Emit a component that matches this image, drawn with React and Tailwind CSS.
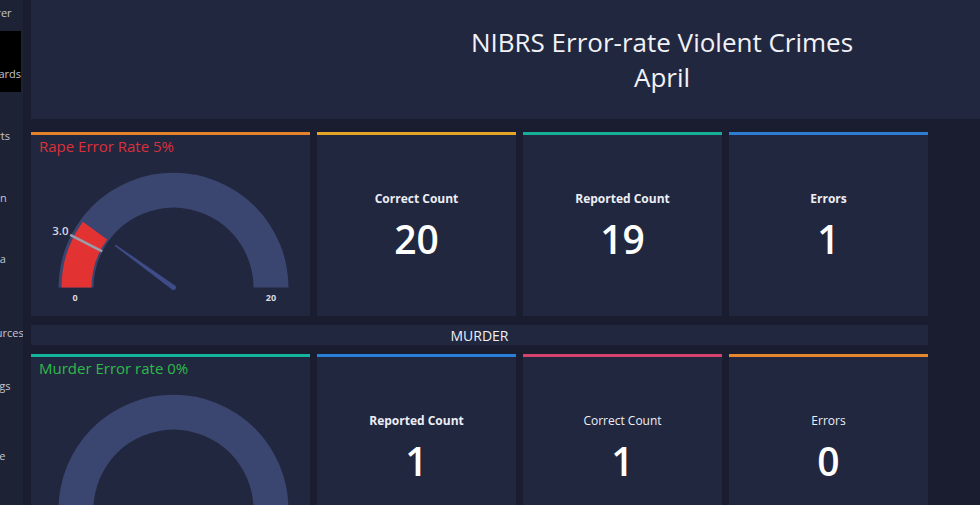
import React from "react";

const navItems = [
  { label: "Explorer", h: "h-[31px]" },
  { label: "Dashboards", h: "h-[61px]", active: true },
  { label: "Reports", h: "h-[62px]" },
  { label: "Admin", h: "h-[62px]" },
  { label: "Media", h: "h-[61px]" },
  { label: "Data Sources", h: "h-[74px]" },
  { label: "Settings", h: "h-[53px]" },
  { label: "Home", h: "h-[70px]" },
];

function Gauge({ value = 4, marker = 3, max = 20, showMarker = true }) {
  const cx = 142.5;
  const cy = 132.6;
  const pt = (r, deg) => {
    const a = (deg * Math.PI) / 180;
    return [cx - r * Math.cos(a), cy - r * Math.sin(a)];
  };
  const va = (value / max) * 180;
  const ma = (marker / max) * 180;
  const [ox, oy] = pt(112, va);
  const [ix, iy] = pt(82, va);
  const [m1x, m1y] = pt(80, ma);
  const [m2x, m2y] = pt(116, ma);
  const [tx, ty] = pt(72, va);
  const a = (va * Math.PI) / 180;
  const nx = Math.sin(a);
  const ny = -Math.cos(a);
  const needle = [
    [cx + 2.5 * nx, cy + 2.5 * ny],
    [tx + 0.8 * nx, ty + 0.8 * ny],
    [tx - 0.8 * nx, ty - 0.8 * ny],
    [cx - 2.5 * nx, cy - 2.5 * ny],
  ]
    .map((p) => p.join(","))
    .join(" ");
  return (
    <svg width="279" height="161" viewBox="0 0 279 161" className="block">
      <path
        d={`M ${cx - 115} ${cy} A 115 115 0 0 1 ${cx + 115} ${cy} L ${cx + 80} ${cy} A 80 80 0 0 0 ${cx - 80} ${cy} Z`}
        fill="#3a4570"
      />
      {value > 0 && (
        <path
          d={`M ${cx - 112} ${cy} A 112 112 0 0 1 ${ox} ${oy} L ${ix} ${iy} A 82 82 0 0 0 ${cx - 82} ${cy} Z`}
          fill="#e33232"
        />
      )}
      {showMarker && (
        <>
          <line x1={m1x} y1={m1y} x2={m2x} y2={m2y} stroke="#9a9dab" strokeWidth="2.5" />
          <text x="37.5" y="80" textAnchor="end" fontSize="11.5" fontWeight="600" fill="#d6d8e0">
            {marker.toFixed(1)}
          </text>
        </>
      )}
      <polygon points={needle} fill="#3e4c88" />
      <circle cx={cx} cy={cy} r="2.5" fill="#3e4c88" />
      <text x="44" y="146" textAnchor="middle" fontSize="9" fontWeight="700" fill="#d8dae2">
        0
      </text>
      <text x="240" y="146" textAnchor="middle" fontSize="9" fontWeight="700" fill="#d8dae2">
        {max}
      </text>
    </svg>
  );
}

function GaugeCard({ title, titleColor, border, value, showMarker }) {
  return (
    <div className={`w-[279px] h-[184px] shrink-0 bg-[#222740] border-t-[3px] ${border} flex flex-col`}>
      <div className={`h-[20px] px-[8px] pt-[1px] text-[15px] leading-[20px] font-normal ${titleColor}`}>{title}</div>
      <Gauge value={value} showMarker={showMarker} />
    </div>
  );
}

function StatCard({ label, value, border, bold = true }) {
  return (
    <div className={`w-[199px] h-[184px] shrink-0 bg-[#222740] border-t-[3px] ${border} flex flex-col items-center pt-[56px]`}>
      <div className={`text-[12px] leading-[16px] text-[#eceef4] ${bold ? "font-bold" : "font-normal"}`}>{label}</div>
      <div className="mt-[10px] text-[39px] leading-[44px] text-white font-semibold">{value}</div>
    </div>
  );
}

export default function App() {
  return (
    <div
      className="flex w-[980px] h-[505px] overflow-hidden bg-[#1a1d30]"
      style={{ fontFamily: '"Open Sans", "Liberation Sans", sans-serif' }}
    >
      <aside className="w-[23px] shrink-0 overflow-hidden bg-[#1e2235]">
        <div className="w-[62px] -ml-[41px] flex flex-col">
          {navItems.map((it) => (
            <div
              key={it.label}
              className={`${it.h} flex flex-col justify-end items-center pb-[12px] ${it.active ? "bg-black" : ""}`}
            >
              <span className="whitespace-nowrap text-[11px] leading-[13px] text-[#c3c6d0]">{it.label}</span>
            </div>
          ))}
        </div>
      </aside>
      <main className="flex-1 ml-[8px] flex flex-col">
        <header className="h-[119px] shrink-0 bg-[#222740] flex items-center justify-center pl-[313px]">
          <h1 className="text-center text-[26px] leading-[35px] font-normal text-[#f1f2f6]">
            NIBRS Error-rate Violent Crimes
            <br />
            April
          </h1>
        </header>
        <div className="mt-[13px] flex gap-[7px]">
          <GaugeCard
            title="Rape Error Rate 5%"
            titleColor="text-[#dc3038]"
            border="border-[#e5822c]"
            value={4}
            showMarker
          />
          <StatCard label="Correct Count" value="20" border="border-[#e3a527]" />
          <StatCard label="Reported Count" value="19" border="border-[#16ae97]" />
          <StatCard label="Errors" value="1" border="border-[#2c7dd3]" />
        </div>
        <div className="mt-[9px] w-[897px] h-[20px] bg-[#222740] flex items-center justify-center text-[14px] text-[#eef0f5]">
          MURDER
        </div>
        <div className="mt-[9px] flex gap-[7px]">
          <GaugeCard
            title="Murder Error rate 0%"
            titleColor="text-[#2dbb48]"
            border="border-[#14b39b]"
            value={0}
            showMarker={false}
          />
          <StatCard label="Reported Count" value="1" border="border-[#2a7fd8]" />
          <StatCard label="Correct Count" value="1" border="border-[#d4436b]" bold={false} />
          <StatCard label="Errors" value="0" border="border-[#e5872d]" bold={false} />
        </div>
      </main>
    </div>
  );
}
